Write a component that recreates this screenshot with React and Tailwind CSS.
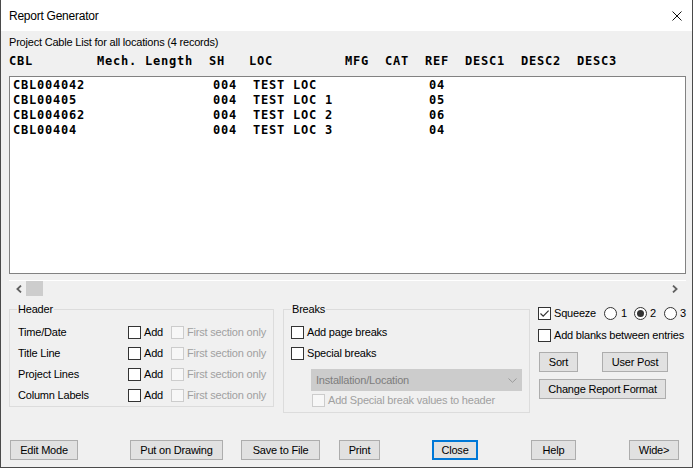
import React from "react";

const UI = "font-['Liberation_Sans',Arial,sans-serif]";
const MONO = "font-['DejaVu_Sans_Mono',monospace] font-bold text-[12px] tracking-[0.776px] whitespace-pre leading-[15px]";

function Check({ checked, disabled }) {
  return (
    <span
      className={`w-[13px] h-[13px] shrink-0 border flex items-center justify-center ${
        disabled ? "border-[#cccccc] bg-[#f7f7f7]" : "border-[#333333] bg-white"
      }`}
    >
      {checked && (
        <svg width="11" height="11" viewBox="0 0 11 11">
          <path d="M1.5 5.5 L4.2 8.2 L9.6 2.6" fill="none" stroke="#333" strokeWidth="1.2" />
        </svg>
      )}
    </span>
  );
}

function Radio({ checked }) {
  return (
    <span className="w-[13px] h-[13px] shrink-0 rounded-full border border-[#333333] bg-white flex items-center justify-center">
      {checked && <span className="w-[7px] h-[7px] rounded-full bg-[#333333]" />}
    </span>
  );
}

function Btn({ children, className = "", def = false }) {
  return (
    <div
      className={`h-[20px] shrink-0 bg-[#e1e1e1] flex items-center justify-center text-black ${
        def ? "border-2 border-[#0078d7]" : "border border-[#adadad]"
      } ${className}`}
    >
      {children}
    </div>
  );
}

function Group({ label, className = "", children }) {
  return (
    <div className={`relative border border-[#dcdcdc] shrink-0 ${className}`}>
      <span className="absolute -top-[8px] left-[7px] px-[1px] bg-[#f0f0f0] leading-[15px]">{label}</span>
      {children}
    </div>
  );
}

const row = (a, b, c, d) => a.padEnd(25) + b.padEnd(5) + c.padEnd(22) + d;

const header =
  "CBL" + " ".repeat(8) + "Mech. Length" + "  " + "SH" + "   " + "LOC" + " ".repeat(9) +
  "MFG" + "  " + "CAT" + "  " + "REF" + "  " + "DESC1" + "  " + "DESC2" + "  " + "DESC3";

const data = [
  row("CBL004042", "004", "TEST LOC", "04"),
  row("CBL00405", "004", "TEST LOC 1", "05"),
  row("CBL004062", "004", "TEST LOC 2", "06"),
  row("CBL00404", "004", "TEST LOC 3", "04"),
];

const headerRows = ["Time/Date", "Title Line", "Project Lines", "Column Labels"];

export default function App() {
  return (
    <div
      className={`${UI} w-[693px] h-[468px] bg-[#f0f0f0] border-x border-b border-[#4a4a4a] flex flex-col text-[11px] tracking-[-0.2px] text-black overflow-hidden`}
    >
      {/* Title bar */}
      <div className="h-[31px] shrink-0 bg-white flex items-center justify-between pl-[8px] pr-[10px]">
        <span className="text-[12px] tracking-[-0.25px]">Report Generator</span>
        <svg width="10" height="10" viewBox="0 0 10 10">
          <path d="M0.5 0.5 L9.5 9.5 M9.5 0.5 L0.5 9.5" stroke="#111" strokeWidth="1" />
        </svg>
      </div>

      {/* Body */}
      <div className="flex-1 flex flex-col pl-[8px] pr-[6px] pb-[7px]">
        <div className="mt-[4px] h-[15px] leading-[15px]">Project Cable List for all locations (4 records)</div>
        <div className={`mt-[4px] ${MONO}`}>{header}</div>

        {/* List box */}
        <div className="mt-[7px] h-[198px] border border-[#828282] bg-white pt-[1px] pl-[3px]">
          {data.map((d, i) => (
            <div key={i} className={MONO}>
              {d}
            </div>
          ))}
        </div>

        {/* Horizontal scrollbar */}
        <div className="mt-[6px] h-[18px] border-t border-white flex items-start">
          <div className="w-[17px] h-[16px] flex items-center justify-center pl-[2px]">
            <svg width="6" height="8" viewBox="0 0 6 8">
              <path d="M5 0.6 L1.4 4 L5 7.4" fill="none" stroke="#606060" strokeWidth="1.8" />
            </svg>
          </div>
          <div className="w-[17px] h-[15px] bg-[#cdcdcd]" />
          <div className="flex-1" />
          <div className="w-[17px] h-[16px] flex items-center justify-center pr-[6px]">
            <svg width="6" height="8" viewBox="0 0 6 8">
              <path d="M1 0.6 L4.6 4 L1 7.4" fill="none" stroke="#606060" strokeWidth="1.8" />
            </svg>
          </div>
        </div>

        {/* Options */}
        <div className="mt-[9px] flex items-start">
          <Group label="Header" className="mt-[2px] w-[265px] h-[98px] pt-[12px] pl-[8px]">
            {headerRows.map((r) => (
              <div key={r} className="h-[21px] flex items-center">
                <span className="w-[110px] leading-[15px]">{r}</span>
                <Check />
                <span className="ml-[3px] w-[27px] leading-[15px]">Add</span>
                <Check disabled />
                <span className="ml-[3px] leading-[15px] text-[#a0a0a0]">First section only</span>
              </div>
            ))}
          </Group>

          <Group label="Breaks" className="mt-[2px] ml-[9px] w-[247px] h-[104px] pt-[12px] pl-[7px]">
            <div className="h-[21px] flex items-center">
              <Check />
              <span className="ml-[3px] leading-[15px]">Add page breaks</span>
            </div>
            <div className="h-[21px] flex items-center">
              <Check />
              <span className="ml-[3px] leading-[15px]">Special breaks</span>
            </div>
            <div className="mt-[5px] ml-[20px] w-[211px] h-[22px] bg-[#cccccc] border border-[#cccccc] flex items-center justify-between pl-[4px] pr-[4px]">
              <span className="text-[#7d7d7d] leading-[15px]">Installation/Location</span>
              <svg width="9" height="5" viewBox="0 0 9 5">
                <path d="M0.5 0.5 L4.5 4.3 L8.5 0.5" fill="none" stroke="#9a9a9a" strokeWidth="1" />
              </svg>
            </div>
            <div className="mt-[3px] ml-[21px] h-[13px] flex items-center">
              <Check disabled />
              <span className="ml-[3px] leading-[15px] text-[#a0a0a0]">Add Special break values to header</span>
            </div>
          </Group>

          <div className="ml-[8px] flex flex-col">
            <div className="h-[13px] flex items-center">
              <Check checked />
              <span className="ml-[3px] w-[50px] leading-[15px]">Squeeze</span>
              <Radio />
              <span className="ml-[4px] w-[13px] leading-[15px]">1</span>
              <Radio checked />
              <span className="ml-[3px] w-[14px] leading-[15px]">2</span>
              <Radio />
              <span className="ml-[3px] leading-[15px]">3</span>
            </div>
            <div className="mt-[9px] h-[13px] flex items-center">
              <Check />
              <span className="ml-[3px] leading-[15px]">Add blanks between entries</span>
            </div>
            <div className="mt-[10px] flex">
              <Btn className="ml-[1px] w-[39px]">Sort</Btn>
              <Btn className="ml-[24px] w-[66px]">User Post</Btn>
            </div>
            <div className="mt-[7px] flex">
              <Btn className="ml-[1px] w-[127px]">Change Report Format</Btn>
            </div>
          </div>
        </div>

        {/* Bottom buttons */}
        <div className="mt-auto flex">
          <Btn className="ml-[1px] w-[68px]">Edit Mode</Btn>
          <Btn className="ml-[52px] w-[93px]">Put on Drawing</Btn>
          <Btn className="ml-[18px] w-[79px]">Save to File</Btn>
          <Btn className="ml-[19px] w-[41px]">Print</Btn>
          <Btn def className="ml-[52px] w-[46px]">Close</Btn>
          <Btn className="ml-[53px] w-[45px]">Help</Btn>
          <Btn className="ml-[53px] w-[50px]">Wide&gt;</Btn>
        </div>
      </div>
    </div>
  );
}
